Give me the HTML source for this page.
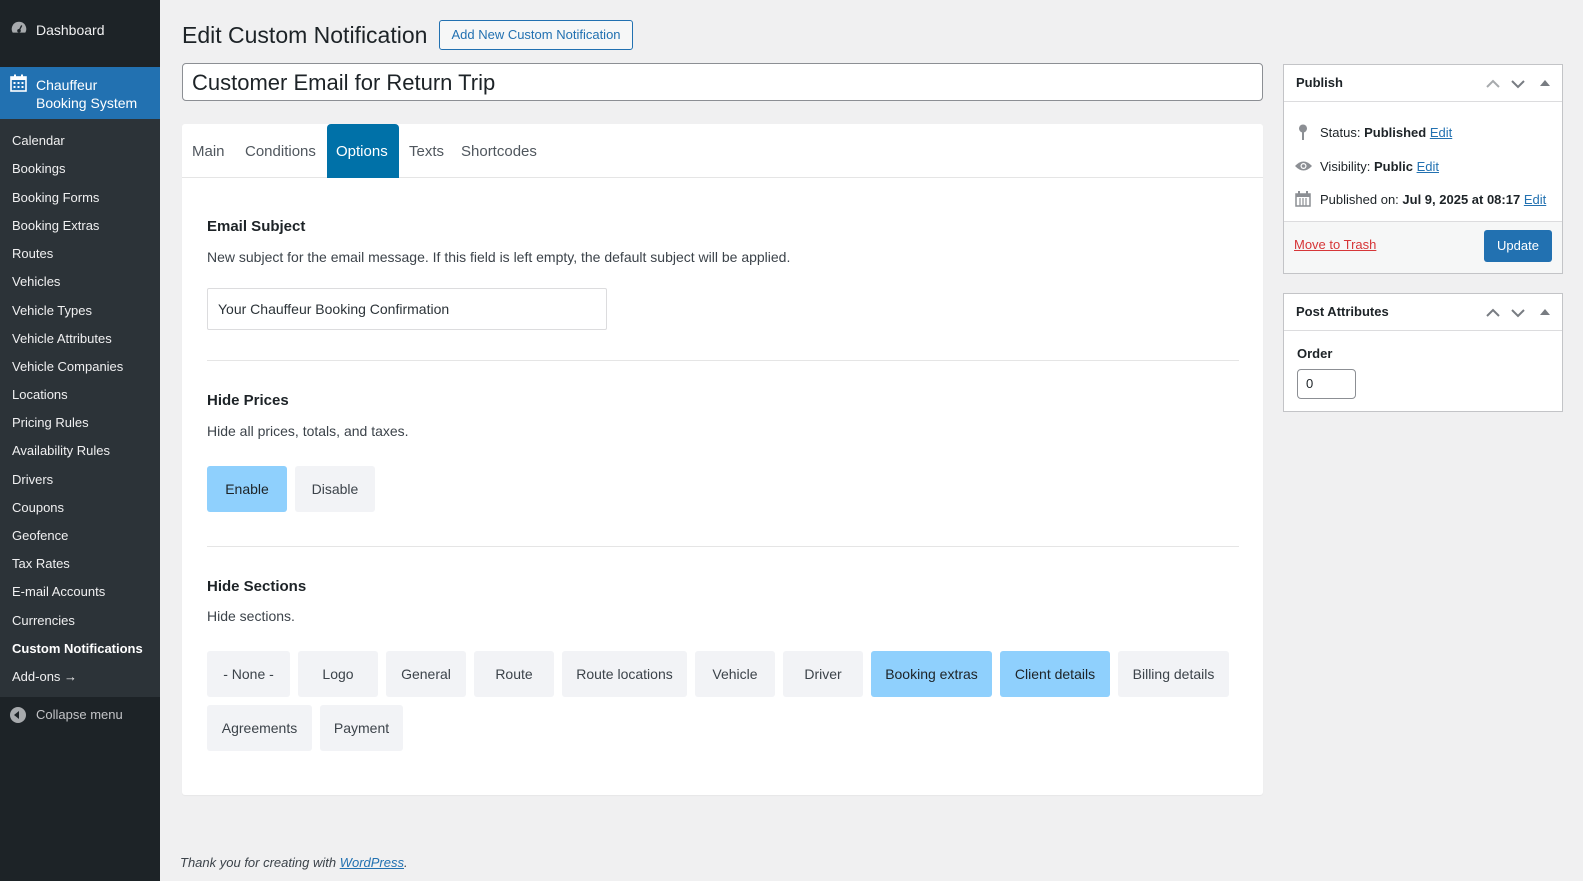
<!DOCTYPE html>
<html><head><meta charset="utf-8"><style>
*{box-sizing:border-box;margin:0;padding:0}
body{width:1583px;height:881px;background:#f0f0f1;font-family:"Liberation Sans",sans-serif;font-size:13px;color:#1d2327;position:relative;overflow:hidden}
#side{position:absolute;left:0;top:0;width:160px;height:881px;background:#1d2327}
#sub{position:absolute;left:0;top:119px;width:160px;height:578px;background:#2c3338}
.abs{position:absolute}
.mi{position:absolute;left:12px;color:#f0f0f1;font-size:13px;white-space:nowrap}
.btn{position:absolute;height:46px;line-height:46px;text-align:center;background:#f2f3f6;color:#3c434a;font-size:14px;border-radius:3px;padding:0 12px}
.btn.on{background:#8fd0fd;color:#1d2327}
.hr{position:absolute;left:207px;width:1032px;height:1px;background:#e5e5e5}
h3{position:absolute;left:207px;font-size:15px;font-weight:bold;color:#1d2327}
.desc{position:absolute;left:207px;font-size:14px;color:#3c434a}
.box{position:absolute;left:1283px;width:280px;background:#fff;border:1px solid #c3c4c7}
.bh{height:37px;border-bottom:1px solid #dcdcde;padding:0 12px;line-height:36px;font-weight:bold;font-size:13px;position:relative}
.ar{position:absolute;top:11px;left:196px}
a{color:#2271b1;text-decoration:underline}
</style></head><body>
<div id="side"></div><div id="sub"></div>
<div class="abs" style="left:0;top:67px;width:160px;height:52px;background:#2271b1"></div>
<div class="abs" style="left:152px;top:86px;width:0;height:0;border:8px solid transparent;border-right-color:#f0f0f1"></div>
<svg class="abs" style="left:10px;top:20px" width="18" height="18" viewBox="0 0 20 20"><path d="M10 2a8 8 0 0 0-7 12h14a8 8 0 0 0-7-12z" fill="#a7aaad"/><circle cx="10" cy="12" r="2" fill="#1d2327"/><path d="M10 12l3-6" stroke="#1d2327" stroke-width="1.5"/></svg>
<div class="mi" style="left:36px;top:22px;font-size:14px">Dashboard</div>
<svg class="abs" style="left:10px;top:74px" width="17" height="18" viewBox="0 0 17 18"><rect x="1" y="3" width="15" height="14" fill="none" stroke="#fff" stroke-width="1.6"/><rect x="1" y="3" width="15" height="3" fill="#fff"/><rect x="4" y="0.5" width="2" height="4" fill="#fff"/><rect x="11" y="0.5" width="2" height="4" fill="#fff"/><g fill="#fff"><rect x="3.5" y="8" width="2" height="2"/><rect x="7.5" y="8" width="2" height="2"/><rect x="11.5" y="8" width="2" height="2"/><rect x="3.5" y="12" width="2" height="2"/><rect x="7.5" y="12" width="2" height="2"/><rect x="11.5" y="12" width="2" height="2"/></g></svg>
<div class="mi" style="left:36px;top:76px;font-size:14px;line-height:18px;color:#fff">Chauffeur<br>Booking System</div>
<div class="mi" style="top:133px">Calendar</div>
<div class="mi" style="top:161px">Bookings</div>
<div class="mi" style="top:190px">Booking Forms</div>
<div class="mi" style="top:218px">Booking Extras</div>
<div class="mi" style="top:246px">Routes</div>
<div class="mi" style="top:274px">Vehicles</div>
<div class="mi" style="top:303px">Vehicle Types</div>
<div class="mi" style="top:331px">Vehicle Attributes</div>
<div class="mi" style="top:359px">Vehicle Companies</div>
<div class="mi" style="top:387px">Locations</div>
<div class="mi" style="top:415px">Pricing Rules</div>
<div class="mi" style="top:443px">Availability Rules</div>
<div class="mi" style="top:472px">Drivers</div>
<div class="mi" style="top:500px">Coupons</div>
<div class="mi" style="top:528px">Geofence</div>
<div class="mi" style="top:556px">Tax Rates</div>
<div class="mi" style="top:584px">E-mail Accounts</div>
<div class="mi" style="top:613px">Currencies</div>
<div class="mi" style="top:641px;font-weight:bold;color:#fff">Custom Notifications</div>
<div class="mi" style="top:669px">Add-ons →</div>
<div class="abs" style="left:10px;top:707px;width:16px;height:16px;border-radius:50%;background:#a7aaad"></div>
<div class="abs" style="left:14px;top:711px;width:0;height:0;border:4px solid transparent;border-right:5px solid #1d2327;border-left:0"></div>
<div class="mi" style="left:36px;top:707px;color:#c3c4c7">Collapse menu</div>

<div class="abs" style="left:182px;top:22px;font-size:23px;color:#1d2327">Edit Custom Notification</div>
<div class="abs" style="left:439px;top:20px;width:194px;height:30px;border:1px solid #2271b1;border-radius:3px;color:#2271b1;font-size:13px;line-height:28px;text-align:center;background:#f6f7f7">Add New Custom Notification</div>
<div class="abs" style="left:182px;top:63px;width:1081px;height:38px;border:1px solid #8c8f94;border-radius:4px;background:#fff;font-size:22px;line-height:37px;padding-left:9px">Customer Email for Return Trip</div>

<div class="abs" style="left:182px;top:124px;width:1081px;height:671px;background:#fff;border-radius:3px;box-shadow:0 1px 1px rgba(0,0,0,.04)"></div>
<div class="abs" style="left:182px;top:177px;width:1081px;height:1px;background:#e5e5e5"></div>
<div class="abs" style="left:327px;top:124px;width:72px;height:54px;background:#0071a8;border-radius:4px 4px 0 0"></div>
<div class="abs" style="left:192px;top:143px;font-size:15px;color:#50575e">Main</div>
<div class="abs" style="left:245px;top:143px;font-size:15px;color:#50575e">Conditions</div>
<div class="abs" style="left:336px;top:143px;font-size:15px;color:#fff">Options</div>
<div class="abs" style="left:409px;top:143px;font-size:15px;color:#50575e">Texts</div>
<div class="abs" style="left:461px;top:143px;font-size:15px;color:#50575e">Shortcodes</div>

<h3 style="top:218px">Email Subject</h3>
<div class="desc" style="top:249px">New subject for the email message. If this field is left empty, the default subject will be applied.</div>
<div class="abs" style="left:207px;top:288px;width:400px;height:42px;border:1px solid #dcdcde;border-radius:2px;font-size:14px;line-height:40px;padding-left:10px;color:#2c3338">Your Chauffeur Booking Confirmation</div>
<div class="hr" style="top:360px"></div>
<h3 style="top:392px">Hide Prices</h3>
<div class="desc" style="top:423px">Hide all prices, totals, and taxes.</div>
<div class="btn on" style="left:207px;top:466px;width:80px">Enable</div>
<div class="btn" style="left:295px;top:466px;width:80px">Disable</div>
<div class="hr" style="top:546px"></div>
<h3 style="top:578px">Hide Sections</h3>
<div class="desc" style="top:608px">Hide sections.</div>
<div class="btn" style="left:207px;top:651px;width:83px">- None -</div>
<div class="btn" style="left:298px;top:651px;width:80px">Logo</div>
<div class="btn" style="left:386px;top:651px;width:80px">General</div>
<div class="btn" style="left:474px;top:651px;width:80px">Route</div>
<div class="btn" style="left:562px;top:651px;width:125px">Route locations</div>
<div class="btn" style="left:695px;top:651px;width:80px">Vehicle</div>
<div class="btn" style="left:783px;top:651px;width:80px">Driver</div>
<div class="btn on" style="left:871px;top:651px;width:121px">Booking extras</div>
<div class="btn on" style="left:1000px;top:651px;width:110px">Client details</div>
<div class="btn" style="left:1118px;top:651px;width:111px">Billing details</div>
<div class="btn" style="left:207px;top:705px;width:105px">Agreements</div>
<div class="btn" style="left:320px;top:705px;width:83px">Payment</div>

<div class="abs" style="left:180px;top:855px;font-size:13px;font-style:italic;color:#3c434a">Thank you for creating with <a>WordPress</a>.</div>

<div class="box" style="top:64px;height:210px">
<div class="bh">Publish<svg class="ar" width="80" height="16" viewBox="0 0 80 16"><path d="M7 11l6-6 6 6" fill="none" stroke="#a7aaad" stroke-width="2"/><path d="M32 5l6 6 6-6" fill="none" stroke="#787c82" stroke-width="2"/><path d="M60 10l5-6 5 6z" fill="#787c82"/></svg></div>
<svg class="abs" style="left:14px;top:59px" width="10" height="16" viewBox="0 0 10 16"><circle cx="5" cy="4.5" r="4" fill="#8c8f94"/><rect x="4" y="7" width="2" height="9" fill="#8c8f94"/></svg>
<div class="abs" style="left:36px;top:60px">Status: <b>Published</b> <a>Edit</a></div>
<svg class="abs" style="left:10px;top:95px" width="19" height="12" viewBox="0 0 19 12"><path d="M1 6Q9.5-3 18 6Q9.5 15 1 6z" fill="#8c8f94"/><circle cx="9.5" cy="6" r="3" fill="#fff"/><circle cx="9.5" cy="6" r="1.8" fill="#8c8f94"/></svg>
<div class="abs" style="left:36px;top:94px">Visibility: <b>Public</b> <a>Edit</a></div>
<svg class="abs" style="left:11px;top:126px" width="16" height="16" viewBox="0 0 16 16"><rect x="1" y="3" width="14" height="12" fill="none" stroke="#8c8f94" stroke-width="1.5"/><rect x="1" y="3" width="14" height="3" fill="#8c8f94"/><rect x="3" y="0" width="2" height="4" fill="#8c8f94"/><rect x="11" y="0" width="2" height="4" fill="#8c8f94"/><path d="M5 7v8M8 7v8M11 7v8" stroke="#8c8f94" stroke-width="1.2"/></svg>
<div class="abs" style="left:36px;top:127px">Published on: <b>Jul 9, 2025 at 08:17</b> <a>Edit</a></div>
<div class="abs" style="left:0;top:156px;width:278px;height:52px;background:#f6f7f7;border-top:1px solid #dcdcde"></div>
<div class="abs" style="left:10px;top:172px"><a style="color:#d63638">Move to Trash</a></div>
<div class="abs" style="left:200px;top:165px;width:68px;height:32px;background:#2271b1;color:#fff;border-radius:3px;text-align:center;line-height:32px;font-size:13px">Update</div>
</div>

<div class="box" style="top:293px;height:119px">
<div class="bh">Post Attributes<svg class="ar" width="80" height="16" viewBox="0 0 80 16"><path d="M7 11l6-6 6 6" fill="none" stroke="#787c82" stroke-width="2"/><path d="M32 5l6 6 6-6" fill="none" stroke="#787c82" stroke-width="2"/><path d="M60 10l5-6 5 6z" fill="#787c82"/></svg></div>
<div class="abs" style="left:13px;top:52px;font-weight:bold">Order</div>
<div class="abs" style="left:13px;top:75px;width:59px;height:30px;border:1px solid #8c8f94;border-radius:4px;line-height:28px;padding-left:8px">0</div>
</div>
</body></html>
